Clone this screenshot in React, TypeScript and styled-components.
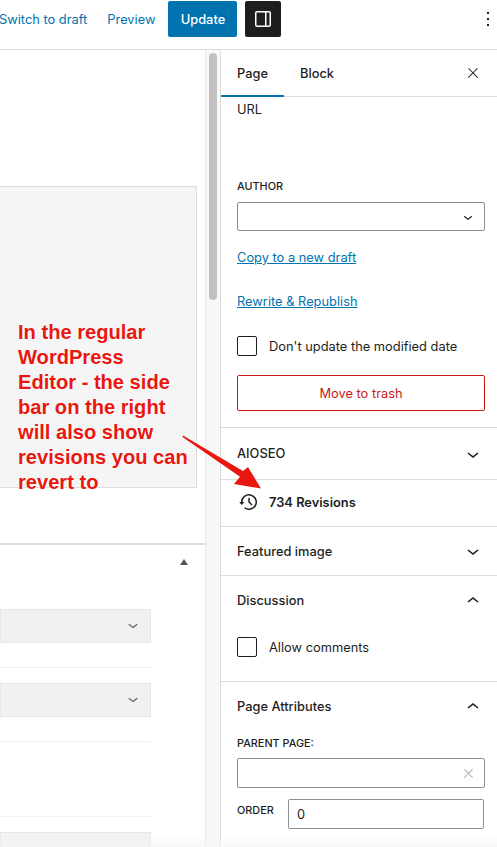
import { ReactNode } from "react";
import styled, { createGlobalStyle } from "styled-components";

const GlobalStyle = createGlobalStyle`
  html, body {
    margin: 0;
    padding: 0;
    background: #fff;
  }
  body {
    font-family: Inter, "Liberation Sans", sans-serif;
    font-size: 12.85px;
    color: #1e1e1e;
    -webkit-font-smoothing: antialiased;
  }
  * {
    box-sizing: border-box;
  }
`;

const Page = styled.div`
  position: relative;
  width: 497px;
  height: 847px;
  overflow: hidden;
  display: flex;
  flex-direction: column;
`;

/* top toolbar */
const Toolbar = styled.header`
  height: 50px;
  flex-shrink: 0;
  border-bottom: 1px solid #dcdcde;
  display: flex;
  align-items: flex-start;
  padding-top: 1px;
`;

const TextAction = styled.a`
  height: 36px;
  line-height: 37px;
  color: #0073b0;
  white-space: nowrap;
  margin-right: ${({ $gap }: { $gap: number }) => $gap}px;
`;

const FirstAction = styled(TextAction)`
  margin-left: -1px;
`;

const UpdateButton = styled.button`
  width: 69px;
  height: 36px;
  border: 0;
  border-radius: 2px;
  background: #0073b0;
  color: #fff;
  font: 500 12.85px Inter, "Liberation Sans", sans-serif;
  margin-right: 8px;
  padding: 1px 0 0;
`;

const ToggleButton = styled.button`
  width: 36px;
  height: 36px;
  border: 0;
  border-radius: 2px;
  background: #1e1e1e;
  color: #fff;
  display: flex;
  align-items: center;
  justify-content: center;
  padding: 0;
`;

const MoreButton = styled.div`
  margin-left: auto;
  margin-right: -3px;
  height: 36px;
  display: flex;
  align-items: center;
`;

const Workspace = styled.div`
  flex: 1;
  min-height: 0;
  display: flex;
`;

/* left side: editor canvas */
const Editor = styled.main`
  width: 205px;
  flex-shrink: 0;
  overflow: hidden;
`;

const Canvas = styled.div`
  height: 495px;
  padding: 136px 8px 0 0;
  border-bottom: 2px solid #dcdcde;
`;

const GreyBlock = styled.div`
  height: 302px;
  background: #f5f5f5;
  border: 1px solid #dcdcde;
  border-left: 0;
`;

const MetaBox = styled.div`
  padding-right: 54px;
`;

const MetaHeader = styled.div`
  height: 64px;
  margin-right: -54px;
  padding: 14px 17px 0 0;
  display: flex;
  justify-content: flex-end;
`;

const Triangle = styled.div`
  width: 0;
  height: 0;
  border-left: 4.5px solid transparent;
  border-right: 4.5px solid transparent;
  border-bottom: 6px solid #50575e;
`;

const MetaRow = styled.div<{ $top: number }>`
  height: ${({ $top }) => 59 + $top}px;
  padding-top: ${({ $top }) => $top}px;
  border-bottom: 1px solid #f0f0f1;
`;

const FakeSelect = styled.div`
  height: 34px;
  background: #f1f1f1;
  border: 1px solid #e6e6e6;
  display: flex;
  align-items: center;
  justify-content: flex-end;
  padding: 0 7px 3px 0;
  color: #5f5f5f;
`;

const EmptyRow = styled.div`
  height: 75px;
  border-bottom: 1px solid #f0f0f1;
`;

const LastSelect = styled(FakeSelect)`
  margin-top: 15px;
`;

/* scrollbar gutter */
const Gutter = styled.div`
  width: 15px;
  flex-shrink: 0;
  background: #f8f8f8;
  border-left: 1px solid #e8e8e8;
  padding: 3px 3px 0 3px;
`;

const Thumb = styled.div`
  height: 247px;
  border-radius: 4px;
  background: #c1c1c1;
`;

/* right side: settings panel */
const Sidebar = styled.aside`
  flex: 1;
  min-width: 0;
  overflow: hidden;
  border-left: 1px solid #dcdcde;
`;

const Tabs = styled.div`
  height: 47px;
  border-bottom: 1px solid #dcdcde;
  display: flex;
  align-items: stretch;
`;

const Tab = styled.div<{ $active?: boolean }>`
  width: ${({ $active }) => ($active ? "63px" : "66px")};
  padding-left: 16px;
  line-height: 47px;
  font-weight: 500;
  margin-bottom: -1px;
  border-bottom: 2px solid ${({ $active }) => ($active ? "#0073b0" : "transparent")};
`;

const CloseButton = styled.div`
  margin-left: auto;
  width: 48px;
  display: flex;
  align-items: center;
  justify-content: center;
`;

const SummaryPanel = styled.section`
  padding: 5px 12px 16px 16px;
  border-bottom: 1px solid #dcdcde;
`;

const UrlLabel = styled.div`
  line-height: 16px;
  height: 76px;
`;

const FieldLabel = styled.div`
  font-size: 10.85px;
  font-weight: 500;
  line-height: 16px;
  text-transform: uppercase;
  height: 24px;
`;

const SelectBox = styled.div`
  height: 29px;
  border: 1px solid #8c8f94;
  border-radius: 2px;
  display: flex;
  align-items: center;
  justify-content: flex-end;
  padding-right: 7px;
`;

const DocLink = styled.a`
  display: block;
  color: #0073b0;
  text-decoration: underline;
  line-height: 18px;
  margin-top: ${({ $top }: { $top: number }) => $top}px;
`;

const CheckRow = styled.label`
  display: flex;
  align-items: center;
  gap: 12px;
  height: 20px;
  margin-top: ${({ $top }: { $top: number }) => $top}px;
`;

const CheckBox = styled.span`
  width: 20px;
  height: 20px;
  border: 1px solid #1e1e1e;
  border-radius: 2px;
  flex-shrink: 0;
`;

const TrashButton = styled.button`
  display: block;
  width: 100%;
  height: 36px;
  margin-top: 19px;
  border: 1px solid #cc1818;
  border-radius: 2px;
  background: #fff;
  color: #cc1818;
  font: 400 12.85px Inter, "Liberation Sans", sans-serif;
  padding: 0;
`;

const Section = styled.section`
  border-bottom: 1px solid #dcdcde;
`;

const SectionHead = styled.div<{ $h: number }>`
  height: ${({ $h }) => $h}px;
  padding: 0 12px 0 16px;
  display: flex;
  align-items: center;
  justify-content: space-between;
  font-weight: 500;
`;

const RevisionsRow = styled.div`
  height: 47px;
  padding: 0 0 2px 16px;
  display: flex;
  align-items: center;
  gap: 8px;
  font-weight: 600;
  border-bottom: 1px solid #dcdcde;
`;

const SectionBody = styled.div`
  padding: 0 12px 40px 16px;
`;

const CommentsBody = styled(SectionBody)`
  height: 56px;
  padding: 12px 12px 0 16px;
`;

const AttributesLabel = styled(FieldLabel)`
  margin-top: 4px;
  height: 23px;
`;

const ParentInput = styled(SelectBox)`
  height: 30px;
  margin-top: 0;
  color: #a7aaad;
  padding-right: 8px;
`;

const OrderRow = styled.div`
  display: flex;
  gap: 12px;
  margin-top: 11px;
`;

const OrderLabel = styled(FieldLabel)`
  width: 39px;
  line-height: 22px;
`;

const OrderInput = styled.div`
  flex: 1;
  margin-right: 1px;
  height: 30px;
  line-height: 29px;
  padding-left: 8px;
  border: 1px solid #8c8f94;
  border-radius: 2px;
`;

const BottomFade = styled.div`
  position: absolute;
  left: 0;
  right: 0;
  bottom: 0;
  height: 14px;
  background: linear-gradient(rgba(245, 245, 245, 0), rgba(245, 245, 245, 0.7));
  pointer-events: none;
`;

/* red note pasted over the screenshot */
const Note = styled.div`
  position: absolute;
  left: 18px;
  top: 320px;
  white-space: nowrap;
  font: 700 20.1px/25px "Liberation Sans", Arial, sans-serif;
  color: #e8170f;
  text-shadow: 0 0 2px #fff, 0 0 2px #fff;
`;

const ArrowMark = styled.svg`
  position: absolute;
  left: 180px;
  top: 430px;
`;

const Icon = ({ d, size = 24, children }: { d?: string; size?: number; children?: ReactNode }) => (
  <svg width={size} height={size} viewBox="0 0 24 24" fill="currentColor" aria-hidden="true">
    {d && <path d={d} />}
    {children}
  </svg>
);

const CHEVRON_DOWN = "M17.5 11.6L12 16l-5.5-4.4.9-1.2L12 14l4.5-3.6 1 1.2z";
const CHEVRON_UP = "M6.5 12.4L12 8l5.5 4.4-.9 1.2L12 10l-4.5 3.6-1-1.2z";
const CLOSE =
  "M13 11.8l6.1-6.3-1-1-6.1 6.2-6.1-6.2-1 1 6.1 6.3-6.5 6.7 1 1 6.5-6.6 6.5 6.6 1-1z";
const MORE = "M13 19h-2v-2h2v2zm0-6h-2v-2h2v2zm0-6h-2V5h2v2z";
const DRAWER =
  "M18 4H6c-1.1 0-2 .9-2 2v12c0 1.1.9 2 2 2h12c1.1 0 2-.9 2-2V6c0-1.1-.9-2-2-2zM6 18.5a.5.5 0 01-.5-.5V6a.5.5 0 01.5-.5h8v13H6zm12.5-.5a.5.5 0 01-.5.5h-2.5v-13H18a.5.5 0 01.5.5v12z";
const HISTORY =
  "M5.5 12h1.75l-2.5 3-2.5-3H4a8 8 0 113.134 6.35l.907-1.194A6.5 6.5 0 105.5 12zm9.53 1.97l-2.28-2.28V8.5a.75.75 0 00-1.5 0V12a.747.747 0 00.218.529l2.5 2.5a.75.75 0 101.062-1.059z";

const App = () => {
  return (
    <Page>
      <GlobalStyle />
      <Toolbar>
        <FirstAction $gap={20}>Switch to draft</FirstAction>
        <TextAction $gap={13}>Preview</TextAction>
        <UpdateButton>Update</UpdateButton>
        <ToggleButton>
          <Icon d={DRAWER} />
        </ToggleButton>
        <MoreButton>
          <Icon d={MORE} />
        </MoreButton>
      </Toolbar>

      <Workspace>
        <Editor>
          <Canvas>
            <GreyBlock />
          </Canvas>
          <MetaBox>
            <MetaHeader>
              <Triangle />
            </MetaHeader>
            <MetaRow $top={0}>
              <FakeSelect>
                <Icon d={CHEVRON_DOWN} size={20} />
              </FakeSelect>
            </MetaRow>
            <MetaRow $top={15}>
              <FakeSelect>
                <Icon d={CHEVRON_DOWN} size={20} />
              </FakeSelect>
            </MetaRow>
            <EmptyRow />
            <LastSelect />
          </MetaBox>
        </Editor>

        <Gutter>
          <Thumb />
        </Gutter>

        <Sidebar>
          <Tabs>
            <Tab $active>Page</Tab>
            <Tab>Block</Tab>
            <CloseButton>
              <Icon d={CLOSE} size={16} />
            </CloseButton>
          </Tabs>

          <SummaryPanel>
            <UrlLabel>URL</UrlLabel>
            <FieldLabel>Author</FieldLabel>
            <SelectBox>
              <Icon d={CHEVRON_DOWN} size={18} />
            </SelectBox>
            <DocLink $top={18}>Copy to a new draft</DocLink>
            <DocLink $top={26}>Rewrite &amp; Republish</DocLink>
            <CheckRow $top={25}>
              <CheckBox />
              Don't update the modified date
            </CheckRow>
            <TrashButton>Move to trash</TrashButton>
          </SummaryPanel>

          <Section>
            <SectionHead $h={51}>
              AIOSEO
              <Icon d={CHEVRON_DOWN} />
            </SectionHead>
          </Section>

          <RevisionsRow>
            <Icon d={HISTORY} />
            734 Revisions
          </RevisionsRow>

          <Section>
            <SectionHead $h={48}>
              Featured image
              <Icon d={CHEVRON_DOWN} />
            </SectionHead>
          </Section>

          <Section>
            <SectionHead $h={49}>
              Discussion
              <Icon d={CHEVRON_UP} />
            </SectionHead>
            <CommentsBody>
              <CheckRow $top={0}>
                <CheckBox />
                Allow comments
              </CheckRow>
            </CommentsBody>
          </Section>

          <Section>
            <SectionHead $h={49}>
              Page Attributes
              <Icon d={CHEVRON_UP} />
            </SectionHead>
            <SectionBody>
              <AttributesLabel>Parent Page:</AttributesLabel>
              <ParentInput>
                <Icon d={CLOSE} size={15} />
              </ParentInput>
              <OrderRow>
                <OrderLabel>Order</OrderLabel>
                <OrderInput>0</OrderInput>
              </OrderRow>
            </SectionBody>
          </Section>
        </Sidebar>
      </Workspace>

      <BottomFade />

      <Note>
        In the regular
        <br />
        WordPress
        <br />
        Editor - the side
        <br />
        bar on the right
        <br />
        will also show
        <br />
        revisions you can
        <br />
        revert to
      </Note>
      <ArrowMark width="90" height="66" viewBox="0 0 90 66">
        <path d="M3 5.5 L63 41 L68 37 L81 58.5 L54 54 L60 46.7 L2.5 7 Z" fill="#e8170f" />
      </ArrowMark>
    </Page>
  );
};

export default App;
